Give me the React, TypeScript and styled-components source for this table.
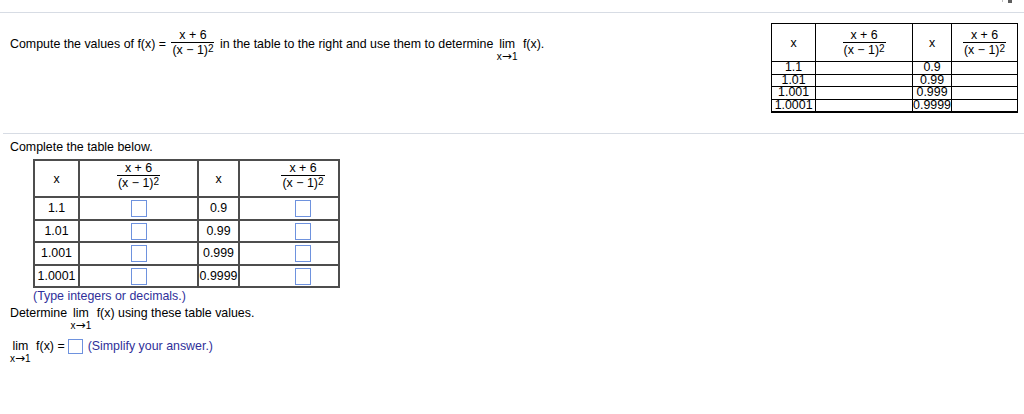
import React from 'react';
import styled, { createGlobalStyle } from 'styled-components';

const GlobalStyle = createGlobalStyle`
  html, body {
    margin: 0;
    padding: 0;
    background: #ffffff;
  }
  body {
    font-family: "Liberation Sans", Arial, Helvetica, sans-serif;
    font-size: 12.4px;
    color: #000000;
  }
`;

const colors = {
  rule: '#d7dce4',
  hint: '#30309a',
  input: '#6e92de',
  icon: '#5e5e5e',
};

// x values on either side of 1
const rows: [string, string][] = [
  ['1.1', '0.9'],
  ['1.01', '0.99'],
  ['1.001', '0.999'],
  ['1.0001', '0.9999'],
];

const Page = styled.div`
  width: 1024px;
  height: 414px;
  overflow: hidden;
`;

const TopStrip = styled.div`
  height: 12px;
  display: flex;
  justify-content: flex-end;
  align-items: flex-start;
  padding-right: 10px;
  border-bottom: 1px solid ${colors.rule};
`;

const Intro = styled.section`
  height: 120px;
  box-sizing: border-box;
  display: flex;
  justify-content: space-between;
  align-items: flex-start;
  padding: 10px 6px 0 10px;
`;

const Prompt = styled.div`
  margin-top: 5px;
  line-height: 14px;
  white-space: nowrap;
`;

const Divider = styled.hr`
  margin: 0 0 0 3px;
  border: none;
  border-top: 1px solid ${colors.rule};
`;

const Work = styled.section`
  padding: 6px 0 0 10px;
`;

const Line = styled.div<{ $gap?: number }>`
  margin-top: ${({ $gap }) => $gap ?? 0}px;
  line-height: 14px;
  white-space: nowrap;
`;

const Indented = styled.div<{ $gap?: number }>`
  margin-left: 23px;
  margin-top: ${({ $gap }) => $gap ?? 0}px;
`;

const Hint = styled.span`
  color: ${colors.hint};
`;

const Fraction = styled.span<{ $inCell?: boolean }>`
  display: inline-block;
  text-align: center;
  line-height: 14px;
  margin: 0 2px;
  vertical-align: ${({ $inCell }) => ($inCell ? 'top' : '-6px')};
`;

const Numerator = styled.span`
  display: block;
  border-bottom: 1px solid #000000;
`;

const Denominator = styled.span`
  display: block;
  padding: 0 1px;
`;

const Sup = styled.span`
  font-size: 10px;
  line-height: 0;
  vertical-align: 2px;
`;

const Limit = styled.span`
  display: inline-flex;
  flex-direction: column;
  align-items: center;
  line-height: 14px;
  margin-right: 2px;
`;

const LimitSub = styled.span`
  font-size: 10px;
  line-height: 10px;
  margin-top: 1px;
`;

const Arrow = styled.span`
  font-family: "DejaVu Sans", sans-serif;
  font-size: 12px;
  line-height: 0;
`;

const Grid = styled.table<{ $work?: boolean }>`
  border-collapse: collapse;
  table-layout: fixed;
  border-bottom: ${({ $work }) => ($work ? '2px solid #4d4d4d' : '2px solid #000000')};
`;

const HeadCell = styled.th<{ $work?: boolean; $lift?: number; $shift?: number }>`
  border: ${({ $work }) => ($work ? '2px solid #4d4d4d' : '1px solid #000000')};
  height: ${({ $work }) => ($work ? 29 : 37)}px;
  padding: 0 0 ${({ $lift }) => $lift ?? 0}px ${({ $shift }) => $shift ?? 0}px;
  font-weight: normal;
  text-align: center;
  vertical-align: middle;
  line-height: 14px;
`;

const Cell = styled.td<{ $work?: boolean; $shift?: number }>`
  border: ${({ $work }) => ($work ? '2px solid #4d4d4d' : '1px solid #000000')};
  height: ${({ $work }) => ($work ? 20.5 : 11.5)}px;
  line-height: ${({ $work }) => ($work ? 20.5 : 11.5)}px;
  padding: 0 0 0 ${({ $shift }) => $shift ?? 0}px;
  text-align: center;
  vertical-align: middle;
  white-space: nowrap;
`;

const InputBox = styled.span<{ $cell?: boolean }>`
  display: inline-block;
  box-sizing: border-box;
  width: ${({ $cell }) => ($cell ? 16 : 15)}px;
  height: ${({ $cell }) => ($cell ? 17 : 15)}px;
  border: 1px solid ${colors.input};
  background: #ffffff;
  vertical-align: ${({ $cell }) => ($cell ? 'middle' : '-4px')};
  margin: ${({ $cell }) => ($cell ? '0' : '0 5px 0 3px')};
`;

const FracExpr = ({ inCell }: { inCell?: boolean }) => (
  <Fraction $inCell={inCell}>
    <Numerator>x + 6</Numerator>
    <Denominator>
      (x − 1)<Sup>2</Sup>
    </Denominator>
  </Fraction>
);

const Lim = () => (
  <Limit>
    <span>lim</span>
    <LimitSub>
      x<Arrow>→</Arrow>1
    </LimitSub>
  </Limit>
);

const CornerIcon = () => (
  <svg width="12" height="4" viewBox="0 0 12 4">
    <rect x="0" y="0" width="1" height="2" fill="#bdbdbd" />
    <rect x="6" y="0" width="4" height="3" fill={colors.icon} />
  </svg>
);

const GivenTable = () => (
  <Grid>
    <colgroup>
      <col style={{ width: 44 }} />
      <col style={{ width: 97 }} />
      <col style={{ width: 36 }} />
      <col style={{ width: 66 }} />
    </colgroup>
    <thead>
      <tr>
        <HeadCell>x</HeadCell>
        <HeadCell>
          <FracExpr inCell />
        </HeadCell>
        <HeadCell>x</HeadCell>
        <HeadCell>
          <FracExpr inCell />
        </HeadCell>
      </tr>
    </thead>
    <tbody>
      {rows.map(([a, b]) => (
        <tr key={a}>
          <Cell>{a}</Cell>
          <Cell />
          <Cell>{b}</Cell>
          <Cell />
        </tr>
      ))}
    </tbody>
  </Grid>
);

const WorkTable = () => (
  <Grid $work>
    <colgroup>
      <col style={{ width: 45 }} />
      <col style={{ width: 119 }} />
      <col style={{ width: 41 }} />
      <col style={{ width: 100 }} />
    </colgroup>
    <thead>
      <tr>
        <HeadCell $work>x</HeadCell>
        <HeadCell $work $lift={6}>
          <FracExpr inCell />
        </HeadCell>
        <HeadCell $work>x</HeadCell>
        <HeadCell $work $lift={6} $shift={28}>
          <FracExpr inCell />
        </HeadCell>
      </tr>
    </thead>
    <tbody>
      {rows.map(([a, b]) => (
        <tr key={a}>
          <Cell $work>{a}</Cell>
          <Cell $work>
            <InputBox $cell />
          </Cell>
          <Cell $work>{b}</Cell>
          <Cell $work $shift={28}>
            <InputBox $cell />
          </Cell>
        </tr>
      ))}
    </tbody>
  </Grid>
);

export default function App() {
  return (
    <Page>
      <GlobalStyle />
      <TopStrip>
        <CornerIcon />
      </TopStrip>
      <Intro>
        <Prompt>
          Compute the values of f(x) = <FracExpr /> in the table to the right and use them to
          determine <Lim /> f(x).
        </Prompt>
        <GivenTable />
      </Intro>
      <Divider />
      <Work>
        <Line>Complete the table below.</Line>
        <Indented $gap={5}>
          <WorkTable />
        </Indented>
        <Indented $gap={1}>
          <Line>
            <Hint>(Type integers or decimals.)</Hint>
          </Line>
        </Indented>
        <Line $gap={3}>
          Determine <Lim /> f(x) using these table values.
        </Line>
        <Line $gap={8}>
          <Lim /> f(x) =<InputBox />
          <Hint>(Simplify your answer.)</Hint>
        </Line>
      </Work>
    </Page>
  );
}
